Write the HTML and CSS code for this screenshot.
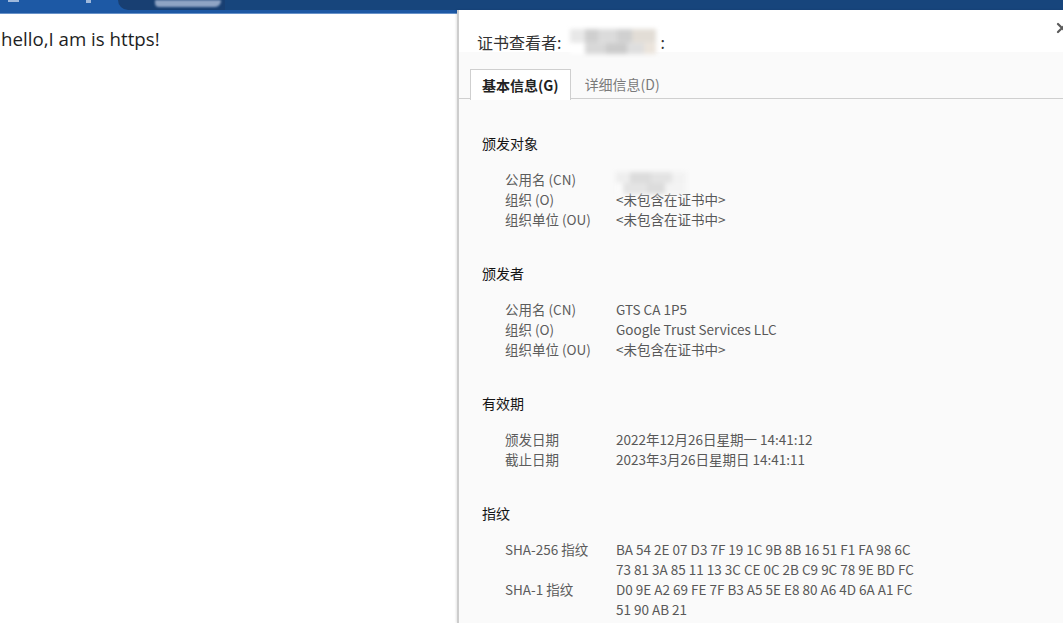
FILE: index.html
```html
<!DOCTYPE html>
<html lang="zh-CN">
<head>
<meta charset="utf-8">
<title>证书查看者</title>
<link rel="stylesheet" href="styles.css">
</head>
<body>
<div class="page">
  <header class="topbar">
    <div class="tb-row">
      <div class="tb-left"><span class="tick t1"></span><span class="tick t2"></span></div>
      <div class="tb-tab"><span class="tab-blur"></span></div>
      <div class="tb-rest"></div>
    </div>
    <div class="tb-band"></div>
  </header>
  <main class="content">
    <p class="hello">hello,I am is https!</p>
  </main>

  <section class="dialog">
    <div class="dlg-title">
      <span class="t-text">证书查看者:</span><span class="blur title-blur"></span><span class="colon">:</span>
    </div>
    <svg class="close" viewBox="0 0 12 12" width="12" height="12"><path d="M2 2 L10 10 M10 2 L2 10" stroke="#5a5a5a" stroke-width="2.2" stroke-linecap="round"/></svg>
    <nav class="tabs">
      <span class="tab active">基本信息(G)</span>
      <span class="tab">详细信息(D)</span>
    </nav>
    <div class="dlg-body">
      <div class="section">
        <h3 class="sec-head">颁发对象</h3>
        <div class="rows">
          <span class="lbl">公用名 (CN)</span><span class="val val-cn"><span class="cn-blur"></span></span>
          <span class="lbl">组织 (O)</span><span class="val">&lt;未包含在证书中&gt;</span>
          <span class="lbl">组织单位 (OU)</span><span class="val">&lt;未包含在证书中&gt;</span>
        </div>
      </div>
      <div class="section">
        <h3 class="sec-head">颁发者</h3>
        <div class="rows">
          <span class="lbl">公用名 (CN)</span><span class="val">GTS CA 1P5</span>
          <span class="lbl">组织 (O)</span><span class="val">Google Trust Services LLC</span>
          <span class="lbl">组织单位 (OU)</span><span class="val">&lt;未包含在证书中&gt;</span>
        </div>
      </div>
      <div class="section">
        <h3 class="sec-head">有效期</h3>
        <div class="rows">
          <span class="lbl">颁发日期</span><span class="val">2022年12月26日星期一 14:41:12</span>
          <span class="lbl">截止日期</span><span class="val">2023年3月26日星期日 14:41:11</span>
        </div>
      </div>
      <div class="section">
        <h3 class="sec-head">指纹</h3>
        <div class="rows">
          <span class="lbl">SHA-256 指纹</span><span class="val">BA 54 2E 07 D3 7F 19 1C 9B 8B 16 51 F1 FA 98 6C<br>73 81 3A 85 11 13 3C CE 0C 2B C9 9C 78 9E BD FC</span>
          <span class="lbl">SHA-1 指纹</span><span class="val">D0 9E A2 69 FE 7F B3 A5 5E E8 80 A6 4D 6A A1 FC<br>51 90 AB 21</span>
        </div>
      </div>
    </div>
  </section>
</div>
</body>
</html>
```
FILE: styles.css
```css
html, body {
  margin: 0;
  padding: 0;
  background: #ffffff;
  overflow: hidden;
  height: 100%;
}

.page {
  position: relative;
  width: 1063px;
  height: 623px;
  overflow: hidden;
}

/* browser top bar (cut) */
.topbar {
  display: flex;
  flex-direction: column;
}
.tb-row {
  display: flex;
  height: 10px;
  background: #1d59a5;
}
.tb-left {
  width: 118px;
  position: relative;
}
.tick {
  position: absolute;
  top: 0;
  height: 2px;
  background: #9fb9dc;
}
.t1 { left: 8px; width: 11px; }
.t2 { left: 86px; width: 5px; height: 3px; }
.tb-tab {
  width: 107px;
  background: #183f72;
  border-bottom-left-radius: 10px;
  display: flex;
  justify-content: flex-end;
  padding-right: 4px;
  box-sizing: border-box;
}
.tab-blur {
  width: 66px;
  height: 7px;
  background: #8fa4c4;
  border-radius: 0 0 6px 4px;
  filter: blur(1px);
}
.tb-rest {
  flex: 1;
  background: #17457c;
}
.tb-band {
  height: 3px;
  background: #1d58a4;
  border-bottom: 1px solid #6791c8;
}

/* page content */
.content {
  padding: 13px 0 0 1px;
}
.hello {
  margin: 0;
  font-family: "Open Sans", "Noto Sans CJK SC", sans-serif;
  font-size: 18.7px;
  line-height: 24px;
  color: #1e1e1e;
}

/* certificate dialog overlay */
.dialog {
  position: absolute;
  left: 457px;
  top: 10px;
  width: 640px;
  bottom: 0;
  background: #fafafa;
  border-left: 2px solid #cdcdcd;
  box-shadow: -1px 0 2px rgba(0, 0, 0, 0.10);
  font-family: "Noto Sans CJK SC", "Noto Sans", sans-serif;
  font-size: 13.5px;
  color: #5a5a5a;
}

.dlg-title {
  height: 42px;
  box-sizing: border-box;
  padding: 21px 0 0 18px;
  background: #ffffff;
  display: flex;
  align-items: center;
  font-size: 16px;
  line-height: 22px;
  color: #333333;
}
.t-text { height: 22px; }

.blur {
  display: inline-block;
  filter: blur(2px);
}
.title-blur {
  width: 86px;
  height: 25px;
  margin: 0 4px 0 9px;
  background:
    linear-gradient(90deg, #e8e8e8 0 18%, #cfcfcf 18% 32%, #dbdbdb 32% 55%, #d0d0d0 55% 72%, #e2ddd6 72% 100%) top / 100% 55% no-repeat,
    linear-gradient(90deg, #ffffff 0 18%, #d8d8d8 18% 42%, #cbcbcb 42% 66%, #dedede 66% 86%, #ebe4dc 86% 100%) bottom / 100% 45% no-repeat;
}
.colon { color: #333; }

.close {
  position: absolute;
  left: 597px;
  top: 12px;
}

.tabs {
  display: flex;
  padding: 17px 0 0 11px;
  border-bottom: 1px solid #cfcfcf;
  height: 29px;
}
.tab {
  height: 27px;
  padding: 2px 14px 0;
  line-height: 27px;
  color: #7a7a7a;
  font-size: 14px;
}
.tab.active {
  padding: 2px 11px 0;
  background: #ffffff;
  border: 1px solid #cfcfcf;
  border-bottom: none;
  font-weight: bold;
  color: #222222;
  margin-bottom: -1px;
  height: 28px;
}

.dlg-body {
  padding: 34px 0 0 23px;
}
.section {
  margin-bottom: 34px;
}
.sec-head {
  margin: 0 0 16px;
  font-size: 14px;
  line-height: 20px;
  font-weight: 400;
  color: #151515;
}
.rows {
  display: grid;
  grid-template-columns: 111px auto;
  padding-left: 23px;
  line-height: 20px;
  color: #5c5c5c;
}
.val { color: #585858; }
.val-cn { height: 20px; }
.cn-blur {
  display: block;
  width: 70px;
  height: 22px;
  margin-top: 3px;
  filter: blur(2px);
  background:
    linear-gradient(90deg, #eeeeee 0 20%, #dcdcdc 20% 50%, #e3e3e3 50% 80%, #f2f2f2 80%) top / 100% 50% no-repeat,
    linear-gradient(90deg, #fbfbfb 0 10%, #e4e4e4 10% 45%, #dcdcdc 45% 70%, #f3f3f3 70%) bottom / 100% 50% no-repeat;
}
```
